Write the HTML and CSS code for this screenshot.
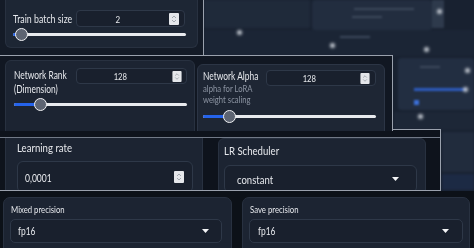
FILE: index.html
```html
<!DOCTYPE html>
<html>
<head>
<meta charset="utf-8">
<link rel="stylesheet" href="styles.css">
</head>
<body>
<div class="stage">
  <div class="backdrop">
    <div class="bl b1"></div><div class="bl b2"></div><div class="bl b3"></div><div class="bl b4"></div>
    <div class="bl b5"></div><div class="bl b6"></div><div class="bl b7"></div><div class="bl b8"></div>
    <div class="bl bar1"></div><div class="bl chk"></div>
    <div class="bl ln l1"></div><div class="bl ln l2"></div><div class="bl ln l3"></div><div class="bl ln l4"></div>
    <div class="dot d2"></div><div class="dot d3"></div><div class="dot d4"></div>
    <div class="dot d5"></div><div class="dot d6"></div><div class="dot d7"></div><div class="dot d8"></div>
  </div>

  <section class="panel panel-a">
    <div class="card card-a">
      <div class="row">
        <div class="label lab-a"><span class="t">Train batch size</span></div>
        <div class="num-input in-a"><span class="num"><span class="t tc">2</span></span>
          <svg class="spin" width="10" height="12" viewBox="0 0 10 12"><rect width="10" height="12" rx="1" fill="#e5e7eb"/><path d="M3 5 L5 3 L7 5 M3 7 L5 9 L7 7" fill="none" stroke="#9aa0a8" stroke-width="0.9"/></svg>
        </div>
      </div>
      <div class="slider sl-a"><div class="track"></div><div class="fill" style="width:8px"></div><div class="thumb" style="left:2px"></div></div>
    </div>
  </section>

  <section class="panel panel-b">
    <div class="card card-b1">
      <div class="row top">
        <div class="label lab-b1"><span class="t">Network Rank<br>(Dimension)</span></div>
        <div class="num-input in-b1"><span class="num"><span class="t tc">128</span></span>
          <svg class="spin" width="10" height="11" viewBox="0 0 10 12"><rect width="10" height="12" rx="1" fill="#e5e7eb"/><path d="M3 5 L5 3 L7 5 M3 7 L5 9 L7 7" fill="none" stroke="#9aa0a8" stroke-width="0.9"/></svg>
        </div>
      </div>
      <div class="slider sl-b1"><div class="track"></div><div class="fill" style="width:26px"></div><div class="thumb" style="left:20px"></div></div>
    </div>
    <div class="card card-b2">
      <div class="row top">
        <div class="label-block">
          <div class="label lab-b2"><span class="t">Network Alpha</span></div>
          <div class="sub"><span class="t">alpha for LoRA<br>weight scaling</span></div>
        </div>
        <div class="num-input in-b2"><span class="num"><span class="t tc">128</span></span>
          <svg class="spin" width="10" height="11" viewBox="0 0 10 12"><rect width="10" height="12" rx="1" fill="#e5e7eb"/><path d="M3 5 L5 3 L7 5 M3 7 L5 9 L7 7" fill="none" stroke="#9aa0a8" stroke-width="0.9"/></svg>
        </div>
      </div>
      <div class="slider sl-b2"><div class="track"></div><div class="fill" style="width:26px"></div><div class="thumb" style="left:20px"></div></div>
    </div>
  </section>

  <section class="panel panel-c">
    <div class="inner-c">
      <div class="card card-c1">
        <div class="label lab-c"><span class="t">Learning rate</span></div>
        <div class="num-input in-c1"><span class="val val-c1"><span class="t">0,0001</span></span>
          <svg class="spin" width="10" height="12" viewBox="0 0 10 12"><rect width="10" height="12" rx="1" fill="#e5e7eb"/><path d="M3 5 L5 3 L7 5 M3 7 L5 9 L7 7" fill="none" stroke="#9aa0a8" stroke-width="0.9"/></svg>
        </div>
      </div>
      <div class="card card-c2">
        <div class="label lab-c"><span class="t">LR Scheduler</span></div>
        <div class="select sel-c2"><span class="val val-c"><span class="t">constant</span></span>
          <svg class="caret" width="7" height="4" viewBox="0 0 7 4"><path d="M0 0 H7 L3.5 4 Z" fill="#f3f4f6"/></svg>
        </div>
      </div>
    </div>
  </section>

  <section class="panel panel-d">
    <div class="card card-d1">
      <div class="label lab-d"><span class="t">Mixed precision</span></div>
      <div class="select sel-d1"><span class="val val-d"><span class="t">fp16</span></span>
        <svg class="caret" width="7" height="4" viewBox="0 0 7 4"><path d="M0 0 H7 L3.5 4 Z" fill="#f3f4f6"/></svg>
      </div>
    </div>
    <div class="card card-d2">
      <div class="label lab-d"><span class="t">Save precision</span></div>
      <div class="select sel-d2"><span class="val val-d"><span class="t">fp16</span></span>
        <svg class="caret" width="7" height="4" viewBox="0 0 7 4"><path d="M0 0 H7 L3.5 4 Z" fill="#f3f4f6"/></svg>
      </div>
    </div>
  </section>
</div>
</body>
</html>
```

FILE: styles.css
```css
* { box-sizing: border-box; }
html, body { margin: 0; padding: 0; background: #0c1118; }
body {
  font-family: Lato, "Liberation Sans", sans-serif;
  color: #e6e8ec;
}
.stage {
  position: relative;
  width: 474px;
  height: 248px;
  overflow: hidden;
  background: #182130;
}

/* condensed text look of the original UI */
.t { display: inline-block; white-space: nowrap; transform: scaleX(0.8); transform-origin: 0 50%; }
.t.tc { transform-origin: 50% 50%; }

/* blurred background of other app windows */
.backdrop { position: absolute; inset: 0; z-index: 0; filter: blur(1.2px); }
.bl, .dot { position: absolute; }
.b1 { left: 204px; top: 0; width: 106px; height: 28px; background: #1f2a3a; }
.b2 { left: 312px; top: 0; width: 120px; height: 30px; background: #222d3f; border-radius: 3px; }
.b3 { left: 432px; top: 0; width: 12px; height: 28px; background: #2e3a4c; }
.b4 { left: 204px; top: 30px; width: 270px; height: 26px; background: #1b2535; }
.b5 { left: 398px; top: 58px; width: 76px; height: 52px; background: #222e41; border-radius: 3px; }
.b6 { left: 394px; top: 112px; width: 80px; height: 18px; background: #1d2737; }
.b7 { left: 442px; top: 132px; width: 32px; height: 40px; background: #212c3d; }
.b8 { left: 442px; top: 174px; width: 32px; height: 16px; background: #1c2a44; }
.bar1 { left: 414px; top: 88px; width: 52px; height: 3px; background: #2d5bbd; }
.chk { left: 414px; top: 100px; width: 5px; height: 5px; background: #3b6fd8; }
.ln { height: 2px; background: #3c485b; }
.l1 { left: 354px; top: 8px; width: 60px; }
.l2 { left: 352px; top: 16px; width: 30px; }
.l3 { left: 420px; top: 66px; width: 20px; }
.l4 { left: 340px; top: 36px; width: 30px; }
.dot { width: 5px; height: 5px; border-radius: 50%; background: #c9ced6; filter: blur(0.8px); }
.d2 { left: 237px; top: 30px; }
.d3 { left: 330px; top: 43px; }
.d4 { left: 424px; top: 47px; }
.d5 { left: 437px; top: 9px; }
.d6 { left: 463px; top: 87px; }
.d7 { left: 465px; top: 68px; }
.d8 { left: 418px; top: 114px; }

.panel { position: absolute; overflow: hidden; }
.card { background: #1c2432; border: 1px solid #283140; }

/* shared controls */
.row { display: flex; align-items: center; }
.row.top { align-items: flex-start; }
.label { color: #e6e8ec; white-space: nowrap; }
.num-input, .select {
  display: flex;
  align-items: center;
  background: #19202d;
  border: 1px solid #2e3848;
  border-radius: 4px;
}
.num { flex: 1; text-align: center; font-size: 9.6px; }
.spin { flex: none; display: block; }
.val { flex: 1; }
.caret { flex: none; display: block; }

.slider { position: relative; height: 13px; }
.slider .track { position: absolute; left: 0; right: 0; top: 5px; height: 3px; border-radius: 2px; background: #e8eaee; }
.slider .fill { position: absolute; left: 0; top: 5px; height: 3px; border-radius: 2px; background: #2563eb; }
.slider .thumb {
  position: absolute; top: 0; width: 13px; height: 13px; border-radius: 50%;
  background: #5d6472; border: 1.5px solid #f1f2f4;
}

/* panel A */
.panel-a {
  left: 0; top: -3px; width: 204px; height: 59px;
  background: #141b27;
  border-right: 1px solid #9aa1ad;
  border-bottom: 1px solid #9aa1ad;
  padding-left: 5px;
  z-index: 4;
}
.card-a {
  width: 193px; height: 51px;
  border-top: none;
  border-radius: 0 0 6px 6px;
  background: #1d2634;
  padding: 13px 0 0 7px;
}
.card-a .row { height: 17px; }
.lab-a { width: 63px; font-size: 11px; }
.in-a { width: 109px; height: 17px; padding-right: 5px; }
.in-a .num { font-size: 10px; padding-right: 10px; }
.sl-a { width: 173px; margin-top: 1px; }

/* panel B */
.panel-b {
  left: 0; top: 55px; width: 393px; height: 76px;
  background: #111722;
  border-top: 1px solid #9aa1ad;
  border-right: 1px solid #9aa1ad;
  padding: 4px 0 0 5px;
  display: flex;
  align-items: flex-start;
  gap: 2px;
  z-index: 3;
}
.card-b1 {
  width: 190px; height: 80px; flex: none;
  border-radius: 6px;
  padding: 7px 0 0 8px;
}
.lab-b1 { width: 62px; font-size: 10.5px; line-height: 14px; }
.in-b1 { width: 111px; height: 16px; padding-right: 4px; }
.sl-b1 { width: 173px; margin-top: 2px; }
.card-b2 {
  width: 188px; height: 80px; flex: none;
  margin-top: 4px;
  border-radius: 6px;
  background: #1e2634;
  border-color: #2c3545;
  padding: 4px 0 0 5px;
}
.label-block { width: 63px; display: flex; flex-direction: column; }
.lab-b2 { font-size: 10.5px; line-height: 14px; }
.sub { font-size: 9.6px; line-height: 11px; color: #8d95a3; white-space: nowrap; }
.in-b2 { width: 110px; height: 16px; margin-top: 1px; padding-right: 5px; }
.in-b1 .num, .in-b2 .num { padding-right: 8px; }
.sl-b2 { width: 173px; margin-top: 5px; }

/* panel C */
.panel-c {
  left: 0; top: 129px; width: 441px; height: 62px;
  background: #0e131c;
  border: 1px solid #9aa1ad;
  border-left: none;
  z-index: 2;
}
.inner-c {
  margin-top: 7px;
  border-top: 1px solid #717987;
  display: flex;
  gap: 15px;
  padding-left: 5px;
}
.card-c1 {
  width: 198px; height: 60px;
  border-top: none;
  border-radius: 0 0 6px 6px;
  padding: 2px 0 0 11px;
}
.lab-c { font-size: 12px; line-height: 16px; }
.in-c1 {
  width: 176px; height: 32px; margin-top: 5px;
  border-radius: 6px;
  padding: 0 8px 0 7px;
}
.val-c1 { font-size: 10.7px; }
.card-c2 {
  width: 208px; height: 60px;
  border-radius: 6px;
  padding: 4px 0 0 5px;
}
.sel-c2 {
  width: 193px; height: 28px; margin-top: 6px;
  border-radius: 6px;
  padding: 0 17px 0 12px;
}
.val-c { font-size: 11.9px; }

/* panel D */
.panel-d {
  left: 0; top: 191px; width: 474px; height: 57px;
  background: #0c1118;
  display: flex;
  gap: 10px;
  padding: 6px 0 0 3px;
  z-index: 1;
}
.card-d1, .card-d2 {
  height: 60px;
  border-radius: 7px;
  padding: 4px 0 0 6px;
  flex: none;
}
.card-d1 { width: 229px; }
.card-d2 { width: 228px; }
.lab-d { font-size: 9.7px; line-height: 14px; padding-left: 1px; }
.select.sel-d1, .select.sel-d2 { height: 24px; margin-top: 3px; border-radius: 5px; }
.sel-d1 { width: 212px; padding: 0 12px 0 7px; }
.sel-d2 { width: 214px; padding: 0 13px 0 8px; }
.val-d { font-size: 10.5px; }
```
